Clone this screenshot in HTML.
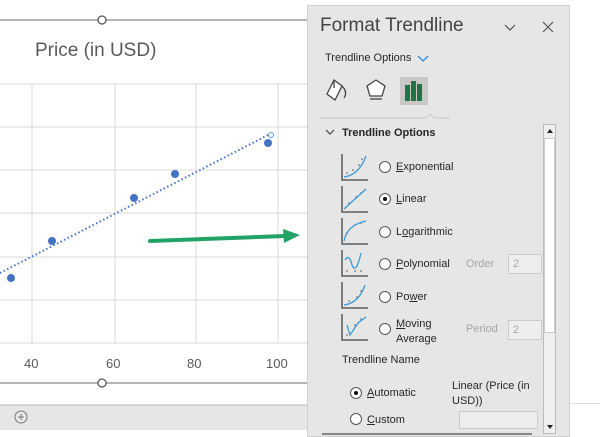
<!DOCTYPE html>
<html><head><style>
body{margin:0;width:600px;height:437px;overflow:hidden;background:#fff;font-family:"Liberation Sans",sans-serif;position:relative}
.a{position:absolute}
.t{font-size:11px;color:#262626}
.rad{position:absolute;width:10px;height:10px;border:1px solid #555;border-radius:50%;background:#fff}
.rad.on::after{content:"";position:absolute;left:3px;top:3px;width:4px;height:4px;border-radius:50%;background:#111}
.g{color:#a6a6a6}
.spin{position:absolute;left:508px;width:34px;height:20px;border:1px solid #ccc;background:#eee;font-size:11px;color:#aaa;box-sizing:border-box;padding:3px 4px}
</style></head><body>
<svg class="a" style="left:0;top:0" width="310" height="437">
<line x1="0" y1="20" x2="308" y2="20" stroke="#888" stroke-width="1.2"/>
<circle cx="102" cy="20" r="4" fill="#fff" stroke="#555" stroke-width="1.3"/>
<text x="35" y="56" font-family="Liberation Sans" font-size="19" fill="#595959">Price (in USD)</text>
<g stroke="#d9d9d9" stroke-width="1">
<line x1="0" y1="84" x2="308" y2="84"/><line x1="0" y1="127" x2="308" y2="127"/><line x1="0" y1="170" x2="308" y2="170"/><line x1="0" y1="213" x2="308" y2="213"/><line x1="0" y1="257" x2="308" y2="257"/><line x1="0" y1="300" x2="308" y2="300"/><line x1="0" y1="343" x2="308" y2="343"/>
<line x1="32" y1="84" x2="32" y2="343"/><line x1="115" y1="84" x2="115" y2="343"/><line x1="196" y1="84" x2="196" y2="343"/><line x1="278" y1="84" x2="278" y2="343"/>
</g>
<line x1="0" y1="273" x2="270" y2="134" stroke="#4472c4" stroke-width="2" stroke-dasharray="1.5 2.5"/>
<circle cx="271" cy="135" r="2.5" fill="#fff" stroke="#5b9bd5"/>
<g fill="#4472c4"><circle cx="11" cy="278" r="4"/><circle cx="52" cy="241" r="4"/><circle cx="134" cy="198" r="4"/><circle cx="175" cy="174" r="4"/><circle cx="268" cy="143" r="4"/></g>
<g font-family="Liberation Sans" font-size="13" fill="#595959"><text x="24" y="368">40</text><text x="106" y="368">60</text><text x="187" y="368">80</text><text x="266" y="368">100</text></g>
<line x1="0" y1="383" x2="308" y2="383" stroke="#888" stroke-width="1.2"/>
<circle cx="102" cy="383" r="4" fill="#fff" stroke="#555" stroke-width="1.3"/>
<rect x="0" y="405" width="308" height="25" fill="#e6e6e6"/>
<line x1="0" y1="405" x2="308" y2="405" stroke="#bbb"/>
<circle cx="21" cy="417" r="6" fill="none" stroke="#777"/><path d="M18 417h6M21 414v6" stroke="#777"/>
<path d="M150 241 L285 236" stroke="#21a366" stroke-width="4" stroke-linecap="round"/>
<path d="M283 229 L300 235 L284 243Z" fill="#21a366"/>
</svg>
<div class="a" style="left:570px;top:0;width:30px;height:437px;background:#fff"></div>
<div class="a" style="left:570px;top:403px;width:30px;height:1px;background:#ddd"></div>
<div class="a" style="left:307px;top:5px;width:263px;height:432px;background:#e6e6e6;border:1px solid #d0d0d0;box-sizing:border-box"></div>
<div class="a" style="left:320px;top:15px;font-size:19px;color:#444">Format Trendline</div>
<svg class="a" style="left:500px;top:20px" width="60" height="16"><path d="M5 5l5 5 5-5" fill="none" stroke="#555" stroke-width="1.2"/><path d="M43 2l10 10M53 2L43 12" stroke="#555" stroke-width="1.2"/></svg>
<div class="a t" style="left:325px;top:52px;font-size:11px">Trendline Options</div>
<svg class="a" style="left:417px;top:55px" width="12" height="8"><path d="M1 1l5 5 5-5" fill="none" stroke="#2b88d8" stroke-width="1.3"/></svg>
<svg class="a" style="left:320px;top:74px" width="130" height="48">
<path d="M14 6 L22 12 L15 26 L7 20 Z M14 6v8" fill="#fff" stroke="#444" stroke-width="1.3"/><path d="M22 12 Q28 18 24 24" fill="none" stroke="#444" stroke-width="1.3"/>
<path d="M56 6 L65 12 L62 22 L50 22 L47 12 Z" fill="#fff" stroke="#444" stroke-width="1.3"/><path d="M50 25h12" stroke="#444" stroke-width="1.3"/>
<rect x="80" y="3" width="28" height="28" fill="#c8c8c8"/>
<rect x="85" y="11" width="5" height="16" fill="#217346"/><rect x="91" y="7" width="5" height="20" fill="#217346"/><rect x="97" y="10" width="5" height="17" fill="#217346"/>
<path d="M0 44H106l4-4 4 4H130" fill="none" stroke="#c8c8c8"/>
</svg>
<svg class="a" style="left:325px;top:128px" width="12" height="10"><path d="M1 2l4 4 4-4" fill="none" stroke="#444" stroke-width="1.2"/></svg>
<div class="a t" style="left:342px;top:127px;font-weight:bold">Trendline Options</div>
<div class="a" style="left:543px;top:124px;width:13px;height:310px;background:#f0f0f0;border:1px solid #bbb;box-sizing:border-box"></div>
<div class="a" style="left:544px;top:138px;width:11px;height:195px;background:#fff;border:1px solid #ccc;box-sizing:border-box"></div>
<svg class="a" style="left:545px;top:127px" width="10" height="8"><path d="M2 6h6L5 2z" fill="#222"/></svg>
<svg class="a" style="left:545px;top:423px" width="10" height="8"><path d="M2 2h6L5 6z" fill="#222"/></svg>
<svg class="a" style="left:341px;top:153px" width="30" height="190" fill="none" stroke="#3a9ad9" stroke-width="1.3">
<g stroke="#444"><path d="M1 1v26h26M1 33v26h26M1 65v26h26M1 97v26h26M1 129v26h26M1 161v26h26"/></g>
<g fill="#555" stroke="none"><circle cx="6" cy="20" r=".8"/><circle cx="12" cy="17" r=".8"/><circle cx="18" cy="12" r=".8"/><circle cx="21" cy="6" r=".8"/><circle cx="8" cy="50" r=".8"/><circle cx="15" cy="44" r=".8"/><circle cx="20" cy="40" r=".8"/><circle cx="6" cy="80" r=".8"/><circle cx="14" cy="72" r=".8"/><circle cx="20" cy="70" r=".8"/><circle cx="6" cy="118" r=".8"/><circle cx="14" cy="118" r=".8"/><circle cx="20" cy="118" r=".8"/><circle cx="8" cy="148" r=".8"/><circle cx="16" cy="144" r=".8"/><circle cx="20" cy="138" r=".8"/><circle cx="6" cy="182" r=".8"/><circle cx="14" cy="172" r=".8"/><circle cx="20" cy="166" r=".8"/></g>
<path d="M3 24 Q18 22 25 3"/><path d="M3 56 L25 36"/><path d="M3 88 Q6 72 25 68"/><path d="M4 107 Q8 100 11 112 Q15 122 20 100"/><path d="M3 152 Q18 150 24 132"/><path d="M6 172 L9 182 L17 170 L25 164"/>
</svg>
<div class="rad" style="left:379px;top:161px"></div><div class="a t" style="left:396px;top:161px"><u>E</u>xponential</div>
<div class="rad on" style="left:379px;top:193px"></div><div class="a t" style="left:396px;top:193px"><u>L</u>inear</div>
<div class="rad" style="left:379px;top:226px"></div><div class="a t" style="left:396px;top:226px">L<u>o</u>garithmic</div>
<div class="rad" style="left:379px;top:258px"></div><div class="a t" style="left:396px;top:258px"><u>P</u>olynomial</div>
<div class="a t g" style="left:466px;top:258px">Order</div><div class="spin" style="top:254px">2</div>
<div class="rad" style="left:379px;top:291px"></div><div class="a t" style="left:396px;top:291px">Po<u>w</u>er</div>
<div class="rad" style="left:379px;top:323px"></div><div class="a t" style="left:396px;top:317px;line-height:15px"><u>M</u>oving<br>Average</div>
<div class="a t g" style="left:466px;top:323px">Period</div><div class="spin" style="top:320px">2</div>
<div class="a t" style="left:342px;top:354px">Trendline Name</div>
<div class="rad on" style="left:350px;top:387px"></div><div class="a t" style="left:367px;top:387px"><u>A</u>utomatic</div>
<div class="a t" style="left:452px;top:379px;line-height:15px">Linear (Price (in<br>USD))</div>
<div class="rad" style="left:350px;top:413px"></div><div class="a t" style="left:367px;top:414px"><u>C</u>ustom</div>
<div class="a" style="left:459px;top:411px;width:79px;height:18px;background:#eee;border:1px solid #ccc;box-sizing:border-box"></div>
<div class="a" style="left:322px;top:433px;width:210px;height:2px;background:#888"></div>
</body></html>
